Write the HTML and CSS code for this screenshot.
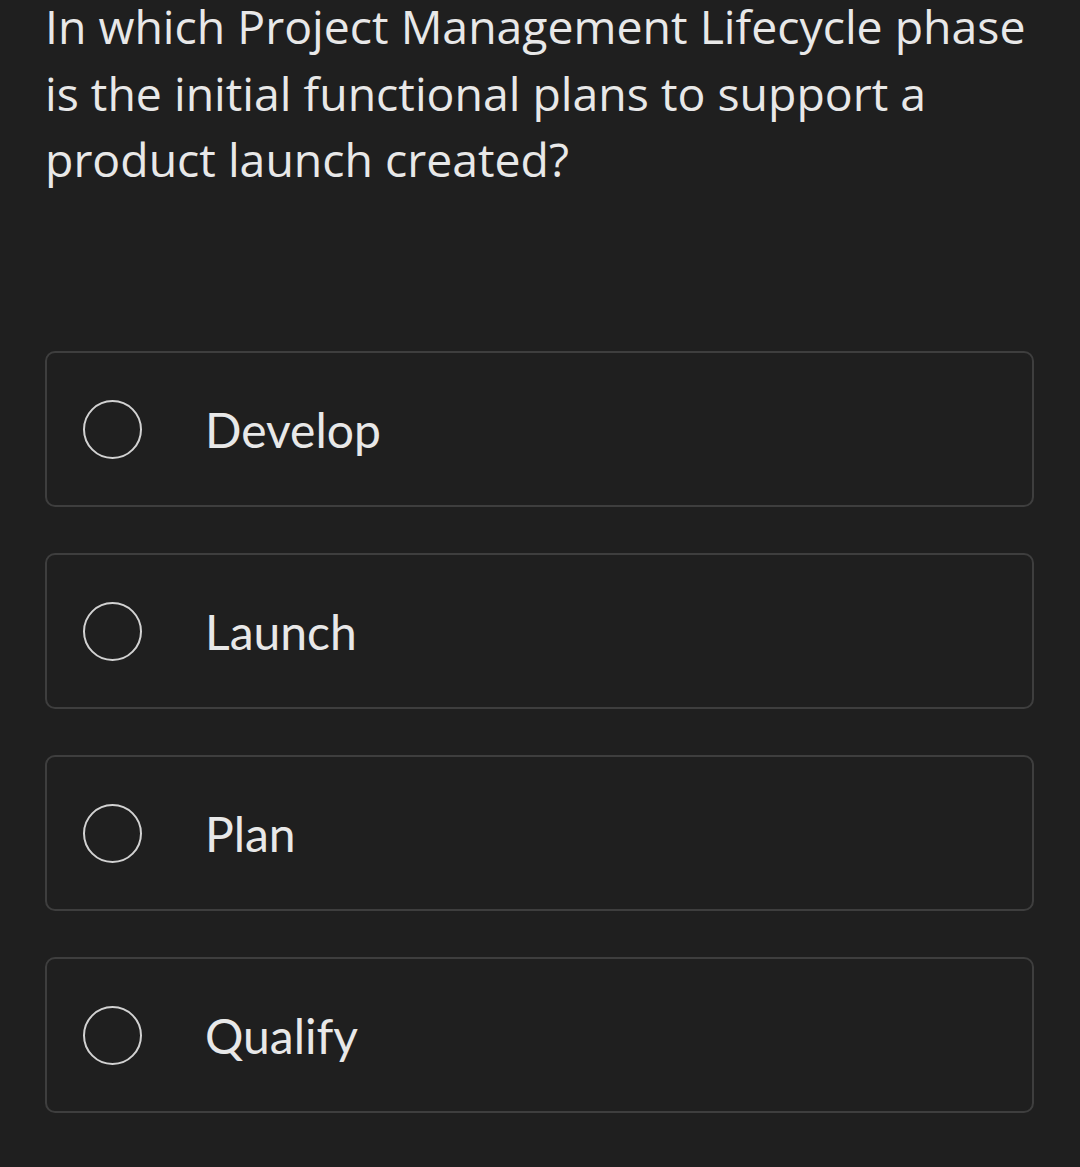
FILE: index.html
```html
<!DOCTYPE html>
<html lang="en">
<head>
<meta charset="utf-8">
<link rel="stylesheet" href="styles.css">
</head>
<body>
<main class="quiz">
  <h1 class="question">In which Project Management Lifecycle phase is the initial functional plans to support a product launch created?</h1>
  <div class="options">
    <label class="option"><span class="radio"></span><span class="label">Develop</span></label>
    <label class="option"><span class="radio"></span><span class="label">Launch</span></label>
    <label class="option"><span class="radio"></span><span class="label">Plan</span></label>
    <label class="option"><span class="radio"></span><span class="label">Qualify</span></label>
  </div>
</main>
</body>
</html>
```
FILE: styles.css
```css
html, body {
  margin: 0;
  padding: 0;
  background: #1f1f1f;
}
body {
  font-family: Lato, "Open Sans", sans-serif;
  color: #e8e8e8;
}
.quiz {
  padding: 0 46px 0 45px;
}
.question {
  margin: 0;
  font-family: "Open Sans", Lato, sans-serif;
  font-weight: 400;
  font-size: 46.4px;
  line-height: 66.5px;
  width: 990px;
  margin-top: -7px;
}
.options {
  display: flex;
  flex-direction: column;
  gap: 46px;
  margin-top: 158.5px;
}
.option {
  display: flex;
  align-items: center;
  height: 156px;
  box-sizing: border-box;
  border: 2px solid #3e3e3e;
  border-radius: 10px;
  padding-left: 36px;
}
.radio {
  width: 59px;
  height: 59px;
  box-sizing: border-box;
  border: 2px solid #d2d2d2;
  border-radius: 50%;
  flex: none;
}
.label {
  margin-left: 63px;
  font-size: 48px;
}
```
